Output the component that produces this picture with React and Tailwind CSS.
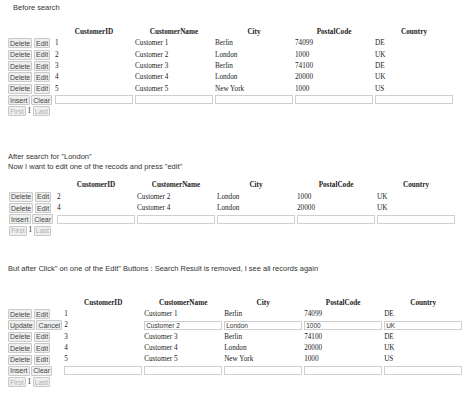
import React from 'react';

const customers = [
  { id: 1, name: 'Customer 1', city: 'Berlin', postal: '74099', country: 'DE' },
  { id: 2, name: 'Customer 2', city: 'London', postal: '1000', country: 'UK' },
  { id: 3, name: 'Customer 3', city: 'Berlin', postal: '74100', country: 'DE' },
  { id: 4, name: 'Customer 4', city: 'London', postal: '20000', country: 'UK' },
  { id: 5, name: 'Customer 5', city: 'New York', postal: '1000', country: 'US' },
];

const columns = ['CustomerID', 'CustomerName', 'City', 'PostalCode', 'Country'];

function Btn({ children, disabled }) {
  return (
    <button
      disabled={disabled}
      className={`h-[10px] px-[1px] border border-[#c9c9c9] bg-[#efefef] rounded-[1px] text-[7px] leading-none font-['Liberation_Sans',Arial,sans-serif] align-middle ${
        disabled ? 'text-[#b0b0b0]' : 'text-[#444]'
      }`}
    >
      {children}
    </button>
  );
}

function Field({ value = '' }) {
  return (
    <input
      readOnly
      value={value}
      className="block h-[9px] w-[78px] border border-[#cfcfcf] bg-white px-[1px] text-[6.5px] leading-none text-[#333] font-['Liberation_Sans',Arial,sans-serif] outline-none"
    />
  );
}

function CustomerGrid({ rows, editId, firstCol, className = '' }) {
  const cell = 'p-0 h-[10px]';
  return (
    <table
      className={`border-separate border-spacing-x-[2px] border-spacing-y-[1.5px] text-[7.2px] leading-[10px] text-[#222] font-['Liberation_Serif','Times_New_Roman',serif] ${className}`}
    >
      <thead>
        <tr>
          <th className={firstCol}></th>
          {columns.map((c) => (
            <th key={c} className="w-[78px] p-0 font-bold text-center leading-[9px]">
              {c}
            </th>
          ))}
        </tr>
      </thead>
      <tbody>
        {rows.map((r) =>
          r.id === editId ? (
            <tr key={r.id}>
              <td className={`${cell} whitespace-nowrap`}>
                <Btn>Update</Btn> <Btn>Cancel</Btn>
              </td>
              <td className={cell}>{r.id}</td>
              <td className={cell}><Field value={r.name} /></td>
              <td className={cell}><Field value={r.city} /></td>
              <td className={cell}><Field value={r.postal} /></td>
              <td className={cell}><Field value={r.country} /></td>
            </tr>
          ) : (
            <tr key={r.id}>
              <td className={`${cell} whitespace-nowrap`}>
                <Btn>Delete</Btn> <Btn>Edit</Btn>
              </td>
              <td className={cell}>{r.id}</td>
              <td className={cell}>{r.name}</td>
              <td className={cell}>{r.city}</td>
              <td className={cell}>{r.postal}</td>
              <td className={cell}>{r.country}</td>
            </tr>
          )
        )}
        <tr>
          <td className={`${cell} whitespace-nowrap`}>
            <Btn>Insert</Btn> <Btn>Clear</Btn>
          </td>
          {columns.map((c) => (
            <td key={c} className={cell}><Field /></td>
          ))}
        </tr>
        <tr>
          <td colSpan={6} className={`${cell} whitespace-nowrap`}>
            <Btn disabled>First</Btn> 1 <Btn disabled>Last</Btn>
          </td>
        </tr>
      </tbody>
    </table>
  );
}

export default function App() {
  const london = customers.filter((c) => c.city === 'London');
  return (
    <div className="w-[474px] h-[395px] overflow-hidden bg-white font-['Liberation_Sans',Arial,sans-serif] text-[7.5px] leading-[10px] text-[#333]">
      {/* Before search */}
      <p className="pl-[13px] pt-[3px]">Before search</p>
      <CustomerGrid rows={customers} firstCol="w-[45px]" className="ml-[6px] mt-[14px]" />

      {/* After search */}
      <div className="pl-[8px] mt-[35px]">
        <p>After search for "London"</p>
        <p>Now I want to edit one of the recods and press "edit"</p>
      </div>
      <CustomerGrid rows={london} firstCol="w-[46px]" className="ml-[7px] mt-[8px]" />

      {/* After edit click */}
      <p className="pl-[8px] mt-[27px]">
        But after Click" on one of the Edit" Buttons : Search Result is removed, I see all records again
      </p>
      <CustomerGrid rows={customers} editId={2} firstCol="w-[53px]" className="ml-[6px] mt-[24px]" />
    </div>
  );
}
